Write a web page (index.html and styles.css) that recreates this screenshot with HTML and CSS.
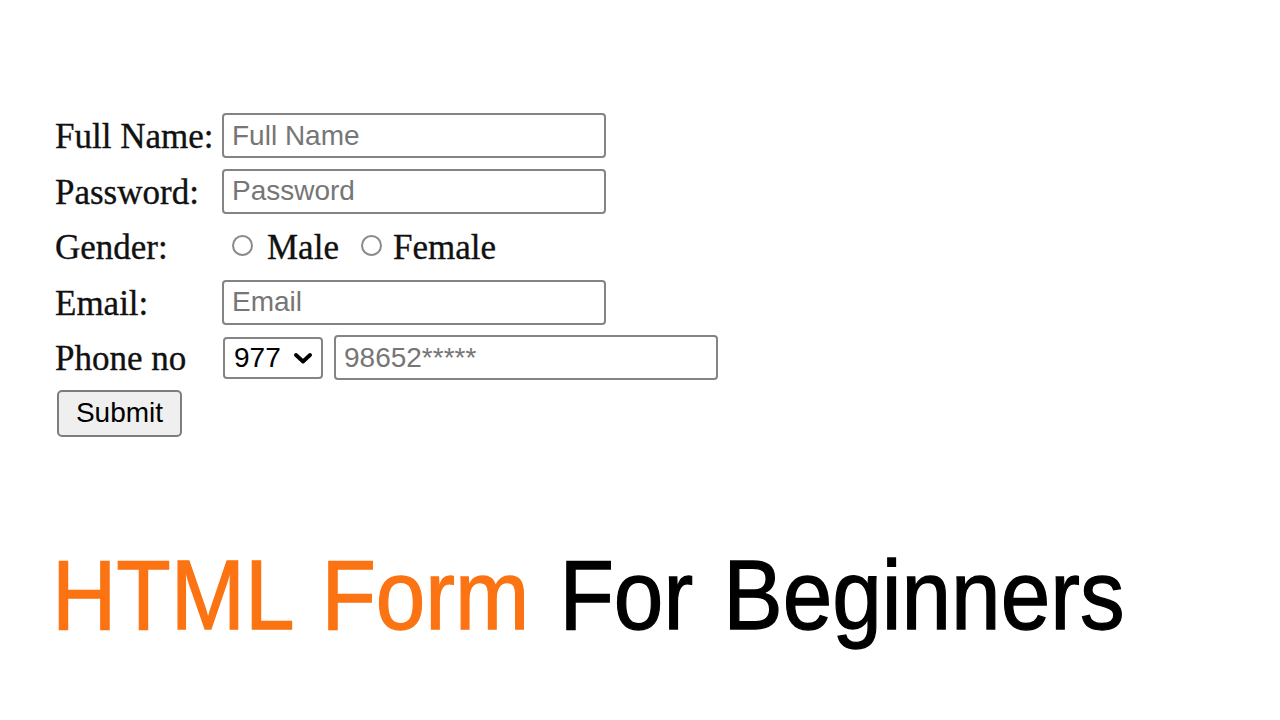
FILE: index.html
```html
<!DOCTYPE html>
<html lang="en">
<head>
<meta charset="utf-8">
<title>HTML Form For Beginners</title>
<link rel="stylesheet" href="styles.css">
</head>
<body>
<main class="page">
  <form class="form">
    <label class="lbl" for="fullname">Full Name:</label>
    <input class="field" id="fullname" type="text" placeholder="Full Name">

    <label class="lbl" for="password">Password:</label>
    <input class="field" id="password" type="password" placeholder="Password">

    <span class="lbl">Gender:</span>
    <div class="radios">
      <input class="radio" type="radio" name="gender" id="male"><label class="rlabel rlabel-male" for="male">Male</label>
      <input class="radio radio-female" type="radio" name="gender" id="female"><label class="rlabel rlabel-female" for="female">Female</label>
    </div>

    <label class="lbl" for="email">Email:</label>
    <input class="field" id="email" type="email" placeholder="Email">

    <label class="lbl" for="phone">Phone no</label>
    <div class="phone">
      <span class="select-wrap">
        <select class="code"><option>977</option></select>
        <svg class="chev" width="18" height="11" viewBox="0 0 18 11"><path d="M2 2 L9 8.5 L16 2" fill="none" stroke="#000" stroke-width="3.8" stroke-linecap="round" stroke-linejoin="round"/></svg>
      </span>
      <input class="field" id="phone" type="tel" placeholder="98652*****">
    </div>

    <button class="submit" type="button">Submit</button>
  </form>

  <h1 class="title"><span class="accent">HTML Form</span> For Beginners</h1>
</main>
</body>
</html>
```

FILE: styles.css
```css
html, body {
  margin: 0;
  padding: 0;
  background: #ffffff;
}

.page {
  width: 1280px;
  height: 720px;
  overflow: hidden;
  padding: 113px 0 0 55px;
  box-sizing: border-box;
}

.form {
  display: grid;
  grid-template-columns: 167px auto;
  grid-auto-rows: 45px;
  row-gap: 10.5px;
  align-items: center;
  justify-items: start;
}

.lbl {
  font-family: "Liberation Serif", "Times New Roman", serif;
  font-size: 35px;
  color: #111;
  line-height: 1.1;
  -webkit-text-stroke: 0.35px #111;
  transform: translateY(2px);
}

.field {
  box-sizing: border-box;
  width: 384px;
  height: 45px;
  margin: 0;
  padding: 0 8px;
  border: 2.5px solid #848484;
  border-radius: 4px;
  background: #fff;
  font-family: "Liberation Sans", Arial, sans-serif;
  font-size: 28px;
  color: #222;
  outline: none;
}

.field::placeholder {
  color: #767676;
}

.radios {
  display: flex;
  align-items: center;
  font-family: "Liberation Serif", "Times New Roman", serif;
  font-size: 35px;
  color: #111;
  line-height: 1.1;
  -webkit-text-stroke: 0.35px #111;
}

.radio {
  appearance: none;
  -webkit-appearance: none;
  box-sizing: border-box;
  width: 21px;
  height: 21px;
  margin: 0 0 3px 10px;
  border: 2.2px solid #8a8a8a;
  border-radius: 50%;
  background: #fff;
}

.rlabel {
  margin-left: 14px;
  transform: translateY(2px);
}

.rlabel-male {
  margin-right: 12px;
}

.radio-female {
  margin-left: 10px;
}

.rlabel-female {
  margin-left: 11px;
}

.phone {
  display: flex;
  align-items: center;
  gap: 11px;
}

.select-wrap {
  position: relative;
  display: inline-block;
  margin-left: 1px;
}

.code {
  appearance: none;
  -webkit-appearance: none;
  box-sizing: border-box;
  width: 100px;
  height: 42px;
  margin: 0;
  padding: 0 0 0 9px;
  border: 2.5px solid #848484;
  border-radius: 4px;
  background: #fff;
  font-family: "Liberation Sans", Arial, sans-serif;
  font-size: 28px;
  color: #000;
  display: block;
}

.chev {
  position: absolute;
  left: 71px;
  top: 16px;
  pointer-events: none;
}

.submit {
  grid-column: 1 / 3;
  box-sizing: border-box;
  width: 125px;
  height: 47px;
  margin: 0 0 0 2px;
  padding: 0;
  border: 2.5px solid #7d7d7d;
  border-radius: 5px;
  background: #efefef;
  font-family: "Liberation Sans", Arial, sans-serif;
  font-size: 28px;
  color: #000;
}

.title {
  margin: 109px 0 0 -3px;
  font-family: "Liberation Sans", Arial, sans-serif;
  font-weight: normal;
  font-size: 99px;
  line-height: 99px;
  color: #000;
  white-space: nowrap;
  word-spacing: 6px;
  -webkit-text-stroke: 1.3px #000;
  transform: scaleX(0.9);
  transform-origin: left center;
}

.accent {
  color: #fb7312;
  -webkit-text-stroke: 1.3px #fb7312;
}
```
